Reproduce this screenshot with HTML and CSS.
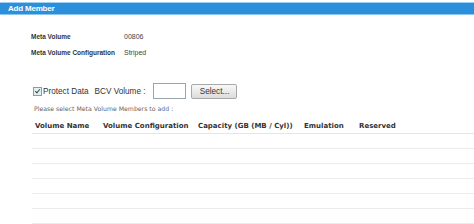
FILE: index.html
```html
<!DOCTYPE html>
<html lang="en">
<head>
    <meta charset="UTF-8">
    <title>Add Member</title>
    <link rel="stylesheet" href="styles.css">
</head>
<body>
    <div class="dialog">
        <div class="title-bar">Add Member</div>

        <div class="content">
            <table class="info">
                <tr>
                    <td class="label">Meta Volume</td>
                    <td>00806</td>
                </tr>
                <tr>
                    <td class="label">Meta Volume Configuration</td>
                    <td>Striped</td>
                </tr>
            </table>

            <div class="options">
                <label class="check">
                    <span class="box checked"></span>
                    Protect Data
                </label>
                <span class="bcv-label">BCV Volume :</span>
                <span class="field"></span>
                <span class="button">Select...</span>
            </div>

            <div class="hint">Please select Meta Volume Members to add :</div>

            <div class="grid">
                <div class="grid-head">
                    <span class="col col-name">Volume Name</span>
                    <span class="col col-config">Volume Configuration</span>
                    <span class="col col-cap">Capacity (GB (MB / Cyl))</span>
                    <span class="col col-emu">Emulation</span>
                    <span class="col col-res">Reserved</span>
                </div>
                <div class="grid-row"></div>
                <div class="grid-row"></div>
                <div class="grid-row"></div>
                <div class="grid-row"></div>
                <div class="grid-row"></div>
                <div class="grid-row"></div>
            </div>
        </div>
    </div>
</body>
</html>
```

FILE: styles.css
```css
body {
    margin: 0;
    background: #fff;
    font-family: 'Liberation Sans', Arial, sans-serif;
    color: #333;
    overflow: hidden;
}

.dialog {
    padding-top: 2px;
}

.title-bar {
    height: 11px;
    line-height: 11px;
    background: #2b8fdb;
    border-top: 1px solid #9fd0f4;
    border-bottom: 1px solid #8cc6ef;
    color: #fff;
    font-size: 8px;
    font-weight: bold;
    padding-left: 8px;
    letter-spacing: -0.2px;
}

.content {
    padding-left: 31px;
}

.info {
    border-collapse: collapse;
    margin-top: 13px;
    font-size: 7px;
    color: #444;
}

.info td {
    padding: 0;
    height: 16px;
    white-space: nowrap;
}

.info .label {
    width: 93px;
    font-size: 6.5px;
    font-weight: bold;
    color: #333;
}

.options {
    display: flex;
    align-items: center;
    margin-top: 23px;
    padding-left: 2px;
    font-size: 8.2px;
    color: #333;
}

.check {
    display: flex;
    align-items: center;
    gap: 1px;
}

.box {
    width: 7px;
    height: 7px;
    border: 1px solid #8a9bb0;
    background: #e6eef6;
    position: relative;
}

.box.checked::after {
    content: '';
    position: absolute;
    left: 2px;
    top: 0;
    width: 2px;
    height: 4px;
    border: solid #2c5c2c;
    border-width: 0 1px 1px 0;
    transform: rotate(40deg);
}

.bcv-label {
    margin-left: 6px;
}

.field {
    width: 31px;
    height: 14px;
    border: 1px solid #9aa4ae;
    background: #fff;
    margin-left: 8px;
}

.button {
    width: 44px;
    height: 13px;
    line-height: 13px;
    margin-left: 5px;
    border: 1px solid #a8a8a8;
    border-radius: 2px;
    background: linear-gradient(#f8f8f8, #dcdcdc);
    text-align: center;
    color: #333;
}

.hint {
    margin-top: 6px;
    padding-left: 3px;
    font-family: 'DejaVu Sans', Verdana, sans-serif;
    font-size: 6.2px;
    color: #666;
}

.grid {
    margin-top: 7px;
    margin-left: 1px;
    font-family: 'DejaVu Sans', Verdana, sans-serif;
}

.grid-head {
    display: flex;
    height: 14px;
    line-height: 14px;
    border-bottom: 1px solid #e6e6e6;
    font-size: 7px;
    font-weight: bold;
    color: #333;
}

.col {
    padding-left: 3px;
}

.col-name { width: 65px; }
.col-config { width: 92px; }
.col-cap { width: 103px; }
.col-emu { width: 52px; }

.grid-row {
    height: 14px;
    border-bottom: 1px solid #ececec;
}
```
